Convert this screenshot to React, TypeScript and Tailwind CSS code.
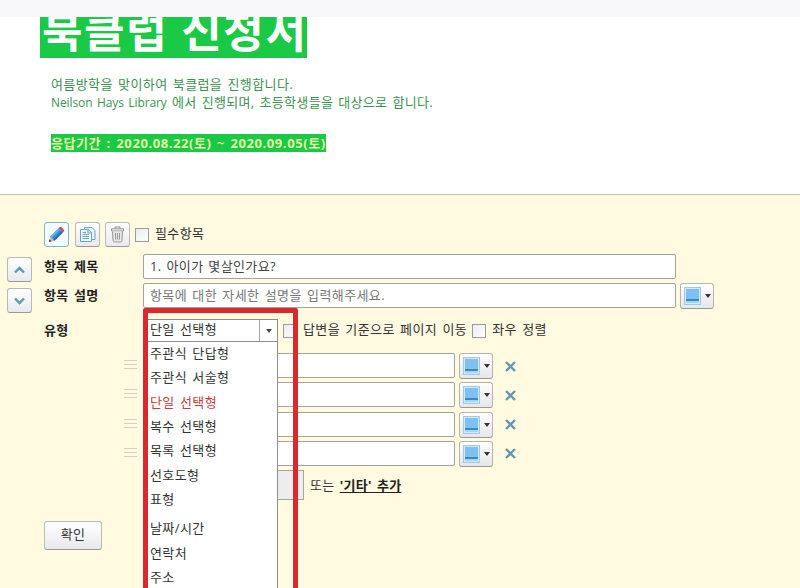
import type { ReactNode } from "react";
import clsx from "clsx";

const TYPE_GROUPS = [
  [
    "주관식 단답형",
    "주관식 서술형",
    "단일 선택형",
    "복수 선택형",
    "목록 선택형",
    "선호도형",
    "표형",
  ],
  ["날짜/시간", "연락처", "주소"],
];

const SELECTED = "단일 선택형";

function IconButton({
  children,
  active,
}: {
  children: ReactNode;
  active?: boolean;
}) {
  return (
    <button
      className={clsx(
        "flex h-[25px] w-[25px] shrink-0 items-center justify-center rounded-[3px] border",
        active
          ? "border-[#7fb3c6] bg-[#f4fbff]"
          : "border-[#b9b9b7] border-b-[#999] bg-linear-to-b from-white to-[#e9e9ee]"
      )}
    >
      {children}
    </button>
  );
}

function Checkbox() {
  return (
    <span className="h-[14px] w-[14px] shrink-0 border border-[#9b9b97] bg-linear-to-br from-[#ececf0] to-white" />
  );
}

function ImageButton() {
  return (
    <button className="flex h-[26px] w-[34px] shrink-0 items-center gap-[4px] self-start rounded-[3px] border border-[#b5b5b3] border-b-[#989898] bg-linear-to-b from-white to-[#e6e6ec] pl-[3px]">
      <svg width="17" height="18" viewBox="0 0 17 18">
        <rect x="0.5" y="0.5" width="16" height="17" fill="#d3eafa" stroke="#a3c9e0" />
        <rect x="2" y="2" width="13" height="10" fill="#7dc0f3" />
        <rect x="2" y="12" width="13" height="2" fill="#3a8ab5" />
        <rect x="2" y="14" width="13" height="2" fill="#a5d5f5" />
      </svg>
      <svg width="6" height="4" viewBox="0 0 6 4">
        <path d="M0 0h6L3 4z" fill="#333" />
      </svg>
    </button>
  );
}

function DragHandle() {
  return (
    <svg width="13" height="9" viewBox="0 0 13 9" className="mb-[2px] shrink-0">
      <path d="M0 .5h13M0 4.5h13M0 8.5h13" stroke="#dccfc2" />
    </svg>
  );
}

function PencilIcon() {
  return (
    <svg width="17" height="17" viewBox="0 0 17 17">
      <path d="M.8 16 2.2 10.5 6.5 14.8z" fill="#d9b6a0" />
      <path d="M.8 16 1.5 13.2 3.6 15.3z" fill="#4a3b52" />
      <path d="M2.2 10.5 10.5 2.2 14.8 6.5 6.5 14.8z" fill="#3d8edb" />
      <path d="M2.2 10.5 10.5 2.2 11.9 3.6 3.6 11.9z" fill="#6fb4ee" />
      <path d="M5.1 13.4 13.4 5.1 14.8 6.5 6.5 14.8z" fill="#2a6cb8" />
      <path d="M10.5 2.2 11.6 1.1q.8-.7 1.6 0l2.7 2.7q.7.8 0 1.6L14.8 6.5z" fill="#b8546c" />
    </svg>
  );
}

function CopyIcon() {
  return (
    <svg width="17" height="17" viewBox="0 0 17 17" fill="none" stroke="#69a5c6">
      <path d="M5.5 3.5v-2h7.5l3 3v9h-3.5" fill="#e4f2fa" />
      <path d="M1.5 3.5h7.5l3.5 3v9h-11z" fill="#f1f9fd" />
      <path d="M9 3.5v3.5h3.5M3.5 6.5h3.5M3.5 8.5h6.5M3.5 10.5h6.5M3.5 12.5h6.5" />
    </svg>
  );
}

function TrashIcon() {
  return (
    <svg width="15" height="17" viewBox="0 0 15 17" fill="none" stroke="#999">
      <path d="M5 2.5v-1.5h5v1.5M1.5 2.8h12v2.2h-12z" fill="#eee" />
      <path d="M2.5 5.5l.5 9q.1 1.5 1.5 1.5h6q1.4 0 1.5-1.5l.5-9" fill="#e6e6e6" />
      <path d="M5.5 7v6.5M7.5 7v6.5M9.5 7v6.5" />
    </svg>
  );
}

function Chevron({ up }: { up?: boolean }) {
  return (
    <svg width="11" height="8" viewBox="0 0 11 8" fill="none" stroke="#5c99b8" strokeWidth="2.4">
      <path d={up ? "M1 6.5 5.5 2 10 6.5" : "M1 1.5 5.5 6 10 1.5"} />
    </svg>
  );
}

function Label({ children }: { children: ReactNode }) {
  return <div className="w-[99px] shrink-0 font-bold text-[#222]">{children}</div>;
}

function TypeDropdown() {
  return (
    <div className="absolute top-[22px] left-0 h-[260px] w-[135px] border border-[#8d8d8d] bg-white">
      {TYPE_GROUPS.map((group, i) => (
        <ul key={i} className={clsx(i > 0 && "mt-[5px]")}>
          {group.map((name) => (
            <li
              key={name}
              className={clsx(
                "h-[24.33px] pl-[6px] leading-[23px]",
                name === SELECTED && "text-[#cf3a3a]"
              )}
            >
              {name}
            </li>
          ))}
        </ul>
      ))}
    </div>
  );
}

export default function App() {
  return (
    <div className="h-[588px] w-[800px] overflow-hidden bg-white font-['Open_Sans','Noto_Sans_CJK_KR',sans-serif] text-[13px] tracking-[0.4px] text-[#333] [word-spacing:1.5px]">
      <div className="h-[17px] bg-[#f8f8fb]" />

      <header className="h-[178px] border-b border-[#bdbdb8] pl-[40px]">
        <div className="flex h-[41px] w-[267px] items-end overflow-hidden bg-[#1ac945]">
          <h1 className="pl-[2px] text-[44px] leading-[53px] font-bold tracking-[1.6px] whitespace-nowrap text-white [word-spacing:0px]">
            북클럽 신청서
          </h1>
        </div>
        <p className="mt-[17px] pl-[11px] leading-[18px] text-[#3a9252]">
          여름방학을 맞이하여 북클럽을 진행합니다.
          <br />
          <span className="text-[12px] tracking-[-0.1px]">Neilson Hays Library</span>{" "}
          <span className="tracking-[0.3px]">
            에서 진행되며, 초등학생들을 대상으로 합니다.
          </span>
        </p>
        <p className="mt-[22px] ml-[11px] h-[18px] w-[275px] bg-[#1ac945] leading-[18px] font-bold tracking-[0.58px] whitespace-nowrap text-[#e6f5a4]">
          응답기간 : 2020.08.22(토) ~ 2020.09.05(토)
        </p>
      </header>

      <section className="flex h-[393px] overflow-hidden bg-[#fffae0]">
        <div className="flex w-[44px] shrink-0 flex-col gap-[6px] pt-[62px] pl-[7px]">
          <IconButton>
            <Chevron up />
          </IconButton>
          <IconButton>
            <Chevron />
          </IconButton>
        </div>

        <div className="flex-1 pt-[27px]">
          <div className="flex h-[25px] items-center">
            <div className="mr-[5px] flex gap-[5.5px]">
              <IconButton active>
                <PencilIcon />
              </IconButton>
              <IconButton>
                <CopyIcon />
              </IconButton>
              <IconButton>
                <TrashIcon />
              </IconButton>
            </div>
            <Checkbox />
            <span className="mb-[2px] ml-[6px]">필수항목</span>
          </div>

          <div className="mt-[7px] flex h-[25px] items-center">
            <Label>항목 제목</Label>
            <input
              className="h-[25px] w-[533px] rounded-[2px] border border-[#a3a39d] bg-white px-[6px] pb-[2px] text-[#444] [word-spacing:1px]"
              defaultValue="1. 아이가 몇살인가요?"
            />
          </div>

          <div className="mt-[4px] flex h-[25px] items-center">
            <Label>항목 설명</Label>
            <input
              className="mr-[4px] h-[25px] w-[533px] rounded-[2px] border border-[#a3a39d] bg-white px-[6px] pb-[2px] [word-spacing:1.5px] placeholder:text-[#777]"
              placeholder="항목에 대한 자세한 설명을 입력해주세요."
            />
            <ImageButton />
          </div>

          <div className="mt-[11px] flex h-[23px] items-center">
            <Label>유형</Label>
            <div className="relative z-10 flex h-[23px] w-[135px] border border-[#8d8d8d] bg-white">
              <span className="flex-1 pl-[6px] leading-[19px]">{SELECTED}</span>
              <span className="flex w-[18px] items-center justify-center border-l border-[#a5a5a5]">
                <svg width="6" height="4" viewBox="0 0 6 4">
                  <path d="M0 0h6L3 4z" fill="#444" />
                </svg>
              </span>
              <div className="absolute -top-px -left-px">
                <TypeDropdown />
              </div>
              {/* highlight frame around the open menu */}
              <div className="absolute -top-[12px] -left-px h-[300px] w-[155px] rounded-[2px] border-[5px] border-[#dc272d]" />
            </div>
            <span className="ml-[5px] flex items-center">
              <Checkbox />
              <span className="mb-[2px] ml-[6px]">답변을 기준으로 페이지 이동</span>
            </span>
            <span className="ml-[5px] flex items-center">
              <Checkbox />
              <span className="mb-[2px] ml-[6px]">좌우 정렬</span>
            </span>
          </div>

          <div className="mt-[11px] flex flex-col gap-[4.3px] pl-[80px]">
            {[1, 2, 3, 4].map((n) => (
              <div key={n} className="flex h-[25px] items-center">
                <DragHandle />
                <input className="mr-[4px] ml-[6px] h-[25px] w-[312px] rounded-[2px] border border-[#a3a39d] bg-white px-[6px]" />
                <ImageButton />
                <svg width="11" height="11" viewBox="0 0 11 11" className="mt-px ml-[12px]">
                  <path d="M1 1l9 9M10 1l-9 9" stroke="#6398b0" strokeWidth="2.4" />
                </svg>
              </div>
            ))}
          </div>

          <div className="mt-[4px] flex h-[30px] items-center pl-[99px]">
            <span className="h-[30px] w-[161px] border border-[#a5a5a2] bg-[#ededed]" />
            <span className="mt-px ml-[6px] tracking-[0.3px]">
              또는{" "}
              <a className="font-bold text-[#222] underline underline-offset-2">
                '기타' 추가
              </a>
            </span>
          </div>

          <button className="mt-[21px] h-[29px] w-[58px] rounded-[3px] border border-[#b9b9b5] border-b-[#999] bg-linear-to-b from-white to-[#e9e9ed] pb-[2px]">
            확인
          </button>
        </div>
      </section>
    </div>
  );
}
